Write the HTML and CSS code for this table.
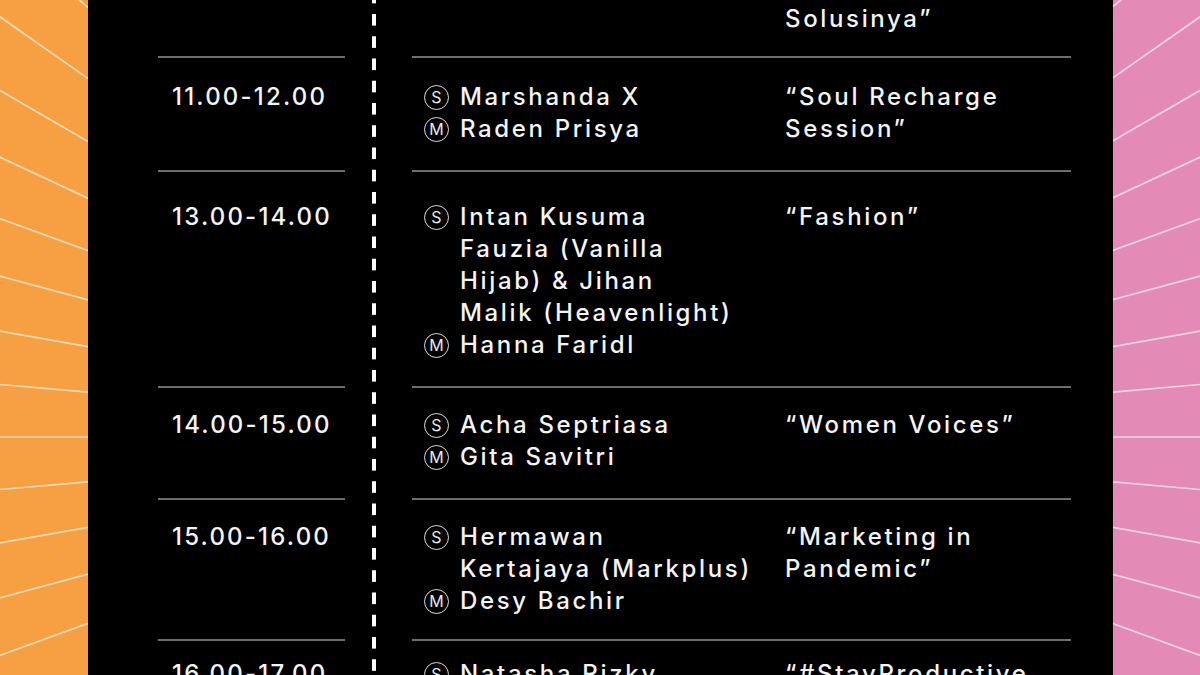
FILE: index.html
```html
<!DOCTYPE html>
<html lang="id">
<head>
<meta charset="utf-8">
<title>Jadwal Acara</title>
<link rel="stylesheet" href="styles.css">
</head>
<body>
<div class="page">
  <aside class="side side-left">
    <svg class="rays" width="88" height="675" viewBox="0 0 88 675">
      <g stroke="rgba(255,250,240,0.66)" stroke-width="1.7">
        <line x1="600" y1="437" x2="-1400" y2="437" transform="rotate(-60 600 437)"/>
        <line x1="600" y1="437" x2="-1400" y2="437" transform="rotate(-55 600 437)"/>
        <line x1="600" y1="437" x2="-1400" y2="437" transform="rotate(-50 600 437)"/>
        <line x1="600" y1="437" x2="-1400" y2="437" transform="rotate(-45 600 437)"/>
        <line x1="600" y1="437" x2="-1400" y2="437" transform="rotate(-40 600 437)"/>
        <line x1="600" y1="437" x2="-1400" y2="437" transform="rotate(-35 600 437)"/>
        <line x1="600" y1="437" x2="-1400" y2="437" transform="rotate(-30 600 437)"/>
        <line x1="600" y1="437" x2="-1400" y2="437" transform="rotate(-25 600 437)"/>
        <line x1="600" y1="437" x2="-1400" y2="437" transform="rotate(-20 600 437)"/>
        <line x1="600" y1="437" x2="-1400" y2="437" transform="rotate(-15 600 437)"/>
        <line x1="600" y1="437" x2="-1400" y2="437" transform="rotate(-10 600 437)"/>
        <line x1="600" y1="437" x2="-1400" y2="437" transform="rotate(-5 600 437)"/>
        <line x1="600" y1="437" x2="-1400" y2="437"/>
        <line x1="600" y1="437" x2="-1400" y2="437" transform="rotate(5 600 437)"/>
        <line x1="600" y1="437" x2="-1400" y2="437" transform="rotate(10 600 437)"/>
        <line x1="600" y1="437" x2="-1400" y2="437" transform="rotate(15 600 437)"/>
        <line x1="600" y1="437" x2="-1400" y2="437" transform="rotate(20 600 437)"/>
        <line x1="600" y1="437" x2="-1400" y2="437" transform="rotate(25 600 437)"/>
        <line x1="600" y1="437" x2="-1400" y2="437" transform="rotate(30 600 437)"/>
        <line x1="600" y1="437" x2="-1400" y2="437" transform="rotate(35 600 437)"/>
        <line x1="600" y1="437" x2="-1400" y2="437" transform="rotate(40 600 437)"/>
        <line x1="600" y1="437" x2="-1400" y2="437" transform="rotate(45 600 437)"/>
        <line x1="600" y1="437" x2="-1400" y2="437" transform="rotate(50 600 437)"/>
        <line x1="600" y1="437" x2="-1400" y2="437" transform="rotate(55 600 437)"/>
        <line x1="600" y1="437" x2="-1400" y2="437" transform="rotate(60 600 437)"/>
        <line x1="600" y1="437" x2="-1400" y2="437" transform="rotate(65 600 437)"/>
        <line x1="600" y1="437" x2="-1400" y2="437" transform="rotate(70 600 437)"/>
        <line x1="600" y1="437" x2="-1400" y2="437" transform="rotate(75 600 437)"/>
        <line x1="600" y1="437" x2="-1400" y2="437" transform="rotate(80 600 437)"/>
      </g>
    </svg>
  </aside>

  <main class="board">
    <div class="schedule">
      <div class="row row-0">
        <div class="time">10.00-11.00</div>
        <div class="detail">
          <div class="people">
            <div class="person"><span class="badge">S</span><span class="name">Andika Pratama</span></div>
            <div class="person"><span class="badge">M</span><span class="name">Mandy Wijaya</span></div>
          </div>
          <div class="topic">“Peluang Usaha<br>Bisnis Daring &amp;<br>Solusinya”</div>
        </div>
      </div>

      <div class="row row-1">
        <div class="time">11.00-12.00</div>
        <div class="detail">
          <div class="people">
            <div class="person"><span class="badge">S</span><span class="name">Marshanda X</span></div>
            <div class="person"><span class="badge">M</span><span class="name">Raden Prisya</span></div>
          </div>
          <div class="topic">“Soul Recharge<br>Session”</div>
        </div>
      </div>

      <div class="row row-2">
        <div class="time">13.00-14.00</div>
        <div class="detail">
          <div class="people">
            <div class="person"><span class="badge">S</span><span class="name">Intan Kusuma<br>Fauzia (Vanilla<br>Hijab) &amp; Jihan<br>Malik (Heavenlight)</span></div>
            <div class="person"><span class="badge">M</span><span class="name">Hanna Faridl</span></div>
          </div>
          <div class="topic">“Fashion”</div>
        </div>
      </div>

      <div class="row row-3">
        <div class="time">14.00-15.00</div>
        <div class="detail">
          <div class="people">
            <div class="person"><span class="badge">S</span><span class="name">Acha Septriasa</span></div>
            <div class="person"><span class="badge">M</span><span class="name">Gita Savitri</span></div>
          </div>
          <div class="topic">“Women Voices”</div>
        </div>
      </div>

      <div class="row row-4">
        <div class="time">15.00-16.00</div>
        <div class="detail">
          <div class="people">
            <div class="person"><span class="badge">S</span><span class="name">Hermawan<br>Kertajaya (Markplus)</span></div>
            <div class="person"><span class="badge">M</span><span class="name">Desy Bachir</span></div>
          </div>
          <div class="topic">“Marketing in<br>Pandemic”</div>
        </div>
      </div>

      <div class="row row-5">
        <div class="time">16.00-17.00</div>
        <div class="detail">
          <div class="people">
            <div class="person"><span class="badge">S</span><span class="name">Natasha Rizky</span></div>
            <div class="person"><span class="badge">M</span><span class="name">Dian Pelangi</span></div>
          </div>
          <div class="topic">“#StayProductive<br>at Home”</div>
        </div>
      </div>
    </div>
  </main>

  <aside class="side side-right">
    <svg class="rays" width="87" height="675" viewBox="0 0 87 675">
      <g stroke="rgba(255,250,252,0.66)" stroke-width="1.7">
        <line x1="-513" y1="437" x2="1487" y2="437" transform="rotate(-80 -513 437)"/>
        <line x1="-513" y1="437" x2="1487" y2="437" transform="rotate(-75 -513 437)"/>
        <line x1="-513" y1="437" x2="1487" y2="437" transform="rotate(-70 -513 437)"/>
        <line x1="-513" y1="437" x2="1487" y2="437" transform="rotate(-65 -513 437)"/>
        <line x1="-513" y1="437" x2="1487" y2="437" transform="rotate(-60 -513 437)"/>
        <line x1="-513" y1="437" x2="1487" y2="437" transform="rotate(-55 -513 437)"/>
        <line x1="-513" y1="437" x2="1487" y2="437" transform="rotate(-50 -513 437)"/>
        <line x1="-513" y1="437" x2="1487" y2="437" transform="rotate(-45 -513 437)"/>
        <line x1="-513" y1="437" x2="1487" y2="437" transform="rotate(-40 -513 437)"/>
        <line x1="-513" y1="437" x2="1487" y2="437" transform="rotate(-35 -513 437)"/>
        <line x1="-513" y1="437" x2="1487" y2="437" transform="rotate(-30 -513 437)"/>
        <line x1="-513" y1="437" x2="1487" y2="437" transform="rotate(-25 -513 437)"/>
        <line x1="-513" y1="437" x2="1487" y2="437" transform="rotate(-20 -513 437)"/>
        <line x1="-513" y1="437" x2="1487" y2="437" transform="rotate(-15 -513 437)"/>
        <line x1="-513" y1="437" x2="1487" y2="437" transform="rotate(-10 -513 437)"/>
        <line x1="-513" y1="437" x2="1487" y2="437" transform="rotate(-5 -513 437)"/>
        <line x1="-513" y1="437" x2="1487" y2="437"/>
        <line x1="-513" y1="437" x2="1487" y2="437" transform="rotate(5 -513 437)"/>
        <line x1="-513" y1="437" x2="1487" y2="437" transform="rotate(10 -513 437)"/>
        <line x1="-513" y1="437" x2="1487" y2="437" transform="rotate(15 -513 437)"/>
        <line x1="-513" y1="437" x2="1487" y2="437" transform="rotate(20 -513 437)"/>
        <line x1="-513" y1="437" x2="1487" y2="437" transform="rotate(25 -513 437)"/>
        <line x1="-513" y1="437" x2="1487" y2="437" transform="rotate(30 -513 437)"/>
        <line x1="-513" y1="437" x2="1487" y2="437" transform="rotate(35 -513 437)"/>
        <line x1="-513" y1="437" x2="1487" y2="437" transform="rotate(40 -513 437)"/>
        <line x1="-513" y1="437" x2="1487" y2="437" transform="rotate(45 -513 437)"/>
        <line x1="-513" y1="437" x2="1487" y2="437" transform="rotate(50 -513 437)"/>
        <line x1="-513" y1="437" x2="1487" y2="437" transform="rotate(55 -513 437)"/>
        <line x1="-513" y1="437" x2="1487" y2="437" transform="rotate(60 -513 437)"/>
      </g>
    </svg>
  </aside>
</div>
</body>
</html>
```
FILE: styles.css
```css
* {
  box-sizing: border-box;
}

html, body {
  margin: 0;
  padding: 0;
}

body {
  width: 1200px;
  height: 675px;
  overflow: hidden;
  background: #000;
  font-family: "Inter", "Noto Sans", sans-serif;
}

.page {
  display: flex;
  width: 1200px;
  height: 675px;
}

.side {
  flex: none;
  height: 675px;
  overflow: hidden;
}

.side-left {
  width: 88px;
  background: #f6a043;
}

.side-right {
  width: 87px;
  background: #e48ab6;
}

.rays {
  display: block;
}

.board {
  flex: 1;
  height: 675px;
  overflow: hidden;
  background: #000;
  padding-left: 70px;
}

.schedule {
  margin-top: -86px;
  width: 913px;
  background-image: linear-gradient(#fff 0 12px, transparent 12px);
  background-size: 4px 22.25px;
  background-repeat: repeat-y;
  background-position: 214px 11px;
  color: #f4f4f4;
  font-size: 24px;
  line-height: 32px;
  font-weight: 500;
  letter-spacing: 2.65px;
}

.row {
  display: flex;
  --pt: 23px;
  --pb: 25px;
}

.time,
.detail {
  border-top: 2px solid #6e6e6e;
  padding-top: var(--pt);
  padding-bottom: var(--pb);
}

.time {
  width: 187px;
  flex: none;
  padding-left: 14px;
  letter-spacing: 2.2px;
}

.detail {
  width: 659px;
  flex: none;
  margin-left: 67px;
  display: flex;
}

.people {
  width: 373px;
  flex: none;
  padding-left: 12px;
}

.person {
  display: flex;
  align-items: flex-start;
}

.badge {
  flex: none;
  width: 25px;
  height: 25px;
  margin-top: 3.5px;
  margin-right: 11px;
  border: 1.5px solid #dcdcdc;
  border-radius: 50%;
  display: flex;
  align-items: center;
  justify-content: center;
  font-size: 16px;
  line-height: 1;
  font-weight: 400;
  letter-spacing: 0;
  color: #e8e8e8;
}

.topic {
  flex: 1;
}

.row-0 { --pt: 23px; --pb: 21px; }
.row-1 { --pt: 23px; --pb: 25px; }
.row-2 { --pt: 29px; --pb: 25px; }
.row-3 { --pt: 21px; --pb: 25px; }
.row-4 { --pt: 21px; --pb: 22px; }
.row-5 { --pt: 17px; --pb: 25px; }
```
